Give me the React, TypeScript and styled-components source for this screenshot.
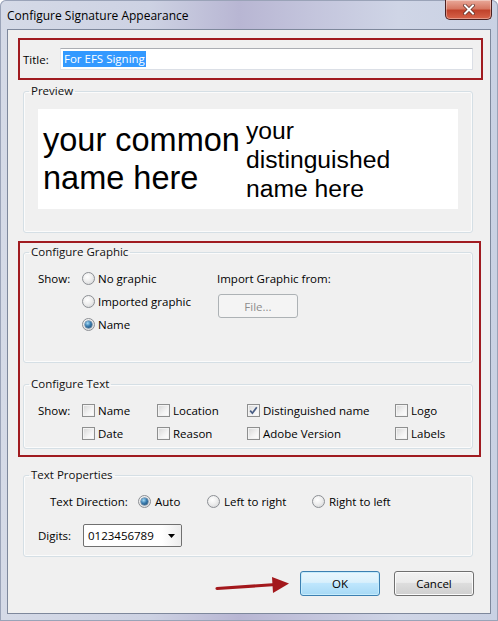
import styled, { createGlobalStyle } from 'styled-components'

const GlobalStyle = createGlobalStyle`
  html, body {
    margin: 0;
    padding: 0;
    background: #ffffff;
  }
  body {
    font-family: 'Open Sans', 'Noto Sans', sans-serif;
    font-size: 11.5px;
    color: #000;
  }
  * {
    box-sizing: border-box;
  }
`

const Window = styled.div`
  position: relative;
  width: 498px;
  height: 621px;
  display: flex;
  flex-direction: column;
  padding: 0 7px 7px 7px;
  border-radius: 6px 6px 0 0;
  background: linear-gradient(
    90deg,
    #d5dae7 0%,
    #cdd2e3 30%,
    #b8b6d3 48%,
    #c3c4dc 62%,
    #cfd5e6 80%,
    #c9d1e3 100%
  );
  box-shadow: inset 0 0 0 1px #9aa3b8;
`

const TitleBar = styled.div`
  height: 29px;
  display: flex;
  align-items: flex-start;
  flex-shrink: 0;
`

const TitleText = styled.div`
  padding-top: 7px;
  font-size: 12px;
  color: #000;
`

const CloseButton = styled.div`
  margin-left: auto;
  margin-right: -1px;
  width: 47px;
  height: 20px;
  display: flex;
  align-items: center;
  justify-content: center;
  border: 1px solid #4b2020;
  border-top: none;
  border-radius: 0 0 5px 5px;
  background: linear-gradient(
    180deg,
    #e9a99a 0%,
    #d77863 45%,
    #c1432c 55%,
    #d8644a 100%
  );
  box-shadow: inset 0 0 0 1px rgba(255, 255, 255, 0.35);
`

const Client = styled.div`
  flex: 1;
  display: flex;
  flex-direction: column;
  background: #f0f0f0;
  border: 1px solid #7e889c;
`

const Annotation = styled.div<{ $w: number; $h: number }>`
  width: ${(p) => p.$w}px;
  height: ${(p) => p.$h}px;
  margin-left: 10px;
  border: 2px solid #a01b20;
  flex-shrink: 0;
`

const TitleBox = styled(Annotation)`
  margin-top: 8px;
  display: flex;
  align-items: center;
  padding-left: 3px;
`

const FieldLabel = styled.span<{ $w: number }>`
  width: ${(p) => p.$w}px;
  flex-shrink: 0;
  white-space: nowrap;
`

const TextInput = styled.div`
  width: 413px;
  height: 22px;
  display: flex;
  align-items: center;
  padding-left: 2px;
  background: #fff;
  border: 1px solid #dbdfe6;
  border-top-color: #abadb3;
  border-left-color: #e2e3ea;
`

const Selected = styled.span`
  background: #3399ff;
  color: #fff;
  padding: 0 1px;
  line-height: 16px;
`

const Group = styled.fieldset<{ $h: number; $mt: number; $ml?: number }>`
  margin: ${(p) => p.$mt}px 0 0 ${(p) => p.$ml ?? 0}px;
  width: 450px;
  height: ${(p) => p.$h}px;
  padding: 0 5px;
  border: 1px solid #d5dfe5;
  border-radius: 3px;
  box-shadow: inset 0 0 0 1px #fbfbfb;
  flex-shrink: 0;
  min-width: 0;
`

const Legend = styled.legend`
  padding: 0 2px;
  line-height: 16px;
  color: #111;
`

const PreviewBody = styled.div`
  padding: 10px 9px 0 9px;
`

const PreviewCanvas = styled.div`
  width: 420px;
  height: 100px;
  background: #fff;
  display: flex;
  align-items: center;
  font-family: 'Liberation Sans', Arial, sans-serif;
  color: #000;
`

const CommonName = styled.div`
  width: 208px;
  padding-left: 5px;
  font-size: 32.5px;
  line-height: 38px;
`

const DistName = styled.div`
  width: 165px;
  font-size: 24.7px;
  line-height: 29px;
`

const GraphicBox = styled(Annotation)`
  margin-top: 8px;
  padding: 1px 3px 0 3px;
  display: flex;
  flex-direction: column;
`

const Grid = styled.div<{ $cols: string; $pt: number }>`
  display: grid;
  grid-template-columns: ${(p) => p.$cols};
  grid-auto-rows: 23px;
  padding: ${(p) => p.$pt}px 0 0 9px;
  align-items: center;
`

const Option = styled.label`
  display: flex;
  align-items: center;
  gap: 3px;
  white-space: nowrap;
`

const RadioMark = styled.span<{ $checked?: boolean }>`
  position: relative;
  width: 13px;
  height: 13px;
  flex-shrink: 0;
  border-radius: 50%;
  border: 1px solid #8c8f94;
  background: radial-gradient(
    circle at 40% 35%,
    #ffffff 0%,
    #eeeeee 45%,
    #cfd1d3 100%
  );

  &::after {
    content: '';
    display: ${(p) => (p.$checked ? 'block' : 'none')};
    position: absolute;
    inset: 2px;
    border-radius: 50%;
    background: radial-gradient(
      circle at 38% 32%,
      #a6dcf7 0%,
      #3a7db0 45%,
      #163f63 100%
    );
    box-shadow: 0 0 0 0.5px #365f85;
  }
`

const CheckMark = styled.span`
  width: 13px;
  height: 13px;
  flex-shrink: 0;
  display: flex;
  align-items: center;
  justify-content: center;
  border: 1px solid #8e8f8f;
  background: linear-gradient(135deg, #d6d6d6 0%, #f4f4f4 60%, #ffffff 100%);
  box-shadow: inset 0 0 0 1px #f3f3f3;
`

const ImportCol = styled.div`
  grid-column: 3;
  grid-row: 1 / span 3;
  align-self: start;
  display: flex;
  flex-direction: column;
  padding-top: 4px;
`

const DisabledButton = styled.div`
  margin-top: 8px;
  margin-left: 1px;
  width: 80px;
  height: 24px;
  display: flex;
  align-items: center;
  justify-content: center;
  color: #8d8d8d;
  background: #f4f4f4;
  border: 1px solid #adb2b5;
  border-radius: 3px;
`

const TextPropsBody = styled.div`
  padding: 7px 0 0 9px;
  display: flex;
  flex-direction: column;
`

const DirectionRow = styled.div`
  height: 23px;
  display: flex;
  align-items: center;
  padding-left: 12px;
`

const DirectionItem = styled(Option)<{ $w: number }>`
  width: ${(p) => p.$w}px;
  gap: 4px;
`

const DigitsRow = styled.div`
  margin-top: 11px;
  display: flex;
  align-items: center;
`

const Select = styled.div`
  width: 99px;
  height: 23px;
  display: flex;
  align-items: center;
  background: #fff;
  border: 1px solid #707070;
  border-radius: 2px;
  padding-left: 4px;
`

const SelectValue = styled.span`
  flex: 1;
`

const SelectArrow = styled.span`
  width: 19px;
  height: 100%;
  display: flex;
  align-items: center;
  justify-content: center;
  background: linear-gradient(90deg, #ffffff 0%, #ececec 100%);
  border-radius: 0 2px 2px 0;
`

const ButtonRow = styled.div`
  margin-top: 14px;
  padding-right: 16px;
  display: flex;
  justify-content: flex-end;
  gap: 14px;
`

const DialogButton = styled.div<{ $primary?: boolean }>`
  width: 80px;
  height: 25px;
  display: flex;
  align-items: center;
  justify-content: center;
  border-radius: 3px;
  border: 1px solid ${(p) => (p.$primary ? '#3c7fb1' : '#707070')};
  background: ${(p) =>
    p.$primary
      ? 'linear-gradient(180deg, #eaf6fd 0%, #d9f0fc 45%, #bee6fd 50%, #a7d9f5 100%)'
      : 'linear-gradient(180deg, #f2f2f2 0%, #ebebeb 45%, #dddddd 50%, #cfcfcf 100%)'};
  box-shadow: inset 0 0 0 1px ${(p) => (p.$primary ? '#c6ecfc' : '#fbfbfb')};
`

const Arrow = styled.svg`
  position: absolute;
  left: 214px;
  top: 575px;
`

function Radio({ label, checked }: { label: string; checked?: boolean }) {
  return (
    <Option>
      <RadioMark $checked={checked} />
      {label}
    </Option>
  )
}

function Check({ label, checked }: { label: string; checked?: boolean }) {
  return (
    <Option>
      <CheckMark>
        {checked && (
          <svg width="9" height="9" viewBox="0 0 9 9">
            <path
              d="M1.2 4.6 L3.4 7.2 L7.8 1.2"
              fill="none"
              stroke="#4a5f86"
              strokeWidth="1.7"
            />
          </svg>
        )}
      </CheckMark>
      {label}
    </Option>
  )
}

export default function App() {
  return (
    <>
      <GlobalStyle />
      <Window>
        <TitleBar>
          <TitleText>Configure Signature Appearance</TitleText>
          <CloseButton>
            <svg width="12" height="11" viewBox="0 0 12 11">
              <path
                d="M2 1.5 L10 9.5 M10 1.5 L2 9.5"
                stroke="#5b2a22"
                strokeWidth="3.4"
                strokeLinecap="square"
              />
              <path
                d="M2 1.5 L10 9.5 M10 1.5 L2 9.5"
                stroke="#ffffff"
                strokeWidth="2"
                strokeLinecap="square"
              />
            </svg>
          </CloseButton>
        </TitleBar>
        <Client>
          <TitleBox $w={465} $h={42}>
            <FieldLabel $w={37}>Title:</FieldLabel>
            <TextInput>
              <Selected>For EFS Signing</Selected>
            </TextInput>
          </TitleBox>

          <Group $h={150} $mt={3} $ml={15}>
            <Legend>Preview</Legend>
            <PreviewBody>
              <PreviewCanvas>
                <CommonName>your common name here</CommonName>
                <DistName>your distinguished name here</DistName>
              </PreviewCanvas>
            </PreviewBody>
          </Group>

          <GraphicBox $w={463} $h={216}>
            <Group $h={119} $mt={0}>
              <Legend>Configure Graphic</Legend>
              <Grid $cols="44px 135px auto" $pt={7}>
                <span>Show:</span>
                <Radio label="No graphic" />
                <ImportCol>
                  <span>Import Graphic from:</span>
                  <DisabledButton>File...</DisabledButton>
                </ImportCol>
                <span />
                <Radio label="Imported graphic" />
                <span />
                <Radio label="Name" checked />
              </Grid>
            </Group>

            <Group $h={73} $mt={13}>
              <Legend>Configure Text</Legend>
              <Grid $cols="44px 75px 90px 148px auto" $pt={7}>
                <span>Show:</span>
                <Check label="Name" />
                <Check label="Location" />
                <Check label="Distinguished name" checked />
                <Check label="Logo" />
                <span />
                <Check label="Date" />
                <Check label="Reason" />
                <Check label="Adobe Version" />
                <Check label="Labels" />
              </Grid>
            </Group>
          </GraphicBox>

          <Group $h={90} $mt={10} $ml={15}>
            <Legend>Text Properties</Legend>
            <TextPropsBody>
              <DirectionRow>
                <FieldLabel $w={88}>Text Direction:</FieldLabel>
                <DirectionItem $w={69}>
                  <RadioMark $checked />
                  Auto
                </DirectionItem>
                <DirectionItem $w={105}>
                  <RadioMark />
                  Left to right
                </DirectionItem>
                <DirectionItem $w={110}>
                  <RadioMark />
                  Right to left
                </DirectionItem>
              </DirectionRow>
              <DigitsRow>
                <FieldLabel $w={45}>Digits:</FieldLabel>
                <Select>
                  <SelectValue>0123456789</SelectValue>
                  <SelectArrow>
                    <svg width="7" height="4" viewBox="0 0 7 4">
                      <path d="M0 0 H7 L3.5 4 Z" fill="#000" />
                    </svg>
                  </SelectArrow>
                </Select>
              </DigitsRow>
            </TextPropsBody>
          </Group>

          <ButtonRow>
            <DialogButton $primary>OK</DialogButton>
            <DialogButton>Cancel</DialogButton>
          </ButtonRow>
        </Client>

        <Arrow width="78" height="20" viewBox="0 0 78 20">
          <path d="M3 13.5 L62 9.5" stroke="#a3181c" strokeWidth="3.2" strokeLinecap="round" />
          <path d="M58 2 L75 8.5 L59 18 Z" fill="#a3181c" />
        </Arrow>
      </Window>
    </>
  )
}
